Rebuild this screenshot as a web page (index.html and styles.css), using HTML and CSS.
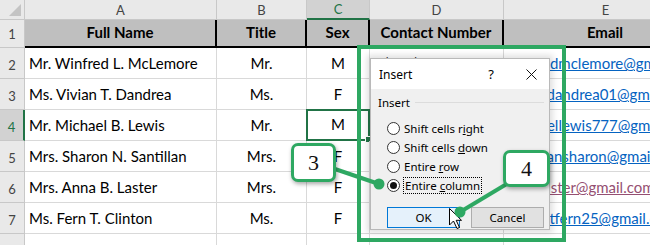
FILE: index.html
```html
<!DOCTYPE html>
<html lang="en">
<head>
  <meta charset="utf-8">
  <link rel="stylesheet" href="styles.css">
  <title>Insert column</title>
</head>
<body>
  <div class="sheet">
    <div class="corner"><span class="tri"></span></div>
    <div class="colh">A</div>
    <div class="colh">B</div>
    <div class="colh sel">C</div>
    <div class="colh">D</div>
    <div class="colh">E</div>

    <div class="rowh">1</div>
    <div class="cell hd">Full Name</div>
    <div class="cell hd">Title</div>
    <div class="cell hd">Sex</div>
    <div class="cell hd">Contact Number</div>
    <div class="cell hd">Email</div>

    <div class="rowh">2</div>
    <div class="cell">Mr. Winfred L. McLemore</div>
    <div class="cell mid">Mr.</div>
    <div class="cell mid">M</div>
    <div class="cell mid">(405) 555-0134</div>
    <div class="cell"><a href="#">winfredmclemore@gmail.com</a></div>

    <div class="rowh">3</div>
    <div class="cell">Ms. Vivian T. Dandrea</div>
    <div class="cell mid">Ms.</div>
    <div class="cell mid">F</div>
    <div class="cell mid">(405) 555-0178</div>
    <div class="cell"><a href="#">viviandandrea01@gmail.com</a></div>

    <div class="rowh sel">4</div>
    <div class="cell">Mr. Michael B. Lewis</div>
    <div class="cell mid">Mr.</div>
    <div class="cell mid active">M<span class="handle"></span></div>
    <div class="cell mid">(405) 555-0112</div>
    <div class="cell"><a href="#">michaellewis777@gmail.com</a></div>

    <div class="rowh">5</div>
    <div class="cell">Mrs. Sharon N. Santillan</div>
    <div class="cell mid">Mrs.</div>
    <div class="cell mid">F</div>
    <div class="cell mid">(405) 555-0190</div>
    <div class="cell"><a href="#">santillansharon@gmail.com</a></div>

    <div class="rowh">6</div>
    <div class="cell">Mrs. Anna B. Laster</div>
    <div class="cell mid">Mrs.</div>
    <div class="cell mid">F</div>
    <div class="cell mid">(405) 555-0145</div>
    <div class="cell"><a href="#" class="visited">annalaster@gmail.com</a></div>

    <div class="rowh">7</div>
    <div class="cell">Ms. Fern T. Clinton</div>
    <div class="cell mid">Ms.</div>
    <div class="cell mid">F</div>
    <div class="cell mid">(405) 555-0163</div>
    <div class="cell"><a href="#">msclintfern25@gmail.com</a></div>

    <div class="rowh">8</div>
    <div class="cell"></div>
    <div class="cell"></div>
    <div class="cell"></div>
    <div class="cell"></div>
    <div class="cell"></div>
  </div>

  <div class="dialog">
    <div class="dlg-title">
      <span class="dlg-name">Insert</span>
      <span class="dlg-help">?</span>
      <span class="dlg-close">
        <svg width="11" height="11" viewBox="0 0 11 11"><path d="M0.5 0.5 L10.5 10.5 M10.5 0.5 L0.5 10.5" stroke="#111" stroke-width="1"/></svg>
      </span>
    </div>
    <div class="dlg-body">
      <div class="group"><span>Insert</span></div>
      <ul class="options">
        <li><span class="radio"></span><span>Shift cells r<u>i</u>ght</span></li>
        <li><span class="radio"></span><span>Shift cells <u>d</u>own</span></li>
        <li><span class="radio"></span><span>Entire <u>r</u>ow</span></li>
        <li><span class="radio on"></span><span class="focus">Entire <u>c</u>olumn</span></li>
      </ul>
      <div class="buttons">
        <span class="btn default">OK</span>
        <span class="btn">Cancel</span>
      </div>
    </div>
  </div>

  <svg class="marks" width="650" height="245" viewBox="0 0 650 245">
    <rect x="359" y="47" width="205" height="193" fill="none" stroke="#2ea862" stroke-width="4"/>
    <line x1="332" y1="168" x2="379" y2="184" stroke="#2ea862" stroke-width="4"/>
    <circle cx="379" cy="184" r="5.5" fill="#2ea862"/>
    <line x1="510" y1="182" x2="460" y2="212" stroke="#2ea862" stroke-width="4"/>
    <path d="M449.5 208.5 L449.5 225 L453.5 221 L457 228.5 L459.5 227.5 L456.2 220.3 L461.5 220.3 Z" fill="#fff" stroke="#000" stroke-width="1"/>
    <circle cx="460" cy="212" r="5.5" fill="#2ea862"/>
  </svg>

  <div class="callout c3">3</div>
  <div class="callout c4">4</div>
</body>
</html>
```

FILE: styles.css
```css
:root {
  --grid: #d9d9d9;
  --head: #e9e9e9;
  --head-sel: #d2d2d2;
  --xl-green: #217346;
  --mark: #2ea862;
}

body {
  margin: 0;
  width: 650px;
  height: 245px;
  overflow: hidden;
  background: #fff;
  font-family: Lato, "Liberation Sans", sans-serif;
  color: #000;
}

/* spreadsheet */

.sheet {
  display: grid;
  grid-template-columns: 25px 192px 90px 63px 134px 204px;
  grid-template-rows: 20px 28px repeat(7, 31px);
  width: 708px;
}

.corner, .colh, .rowh {
  background: var(--head);
  border-right: 1px solid #c8c8c8;
  border-bottom: 1px solid #c8c8c8;
  color: #444;
  font-size: 13px;
}

.corner {
  display: flex;
  align-items: flex-end;
  justify-content: flex-end;
  padding: 0 3px 3px 0;
}
.tri {
  width: 0;
  height: 0;
  border-left: 12px solid transparent;
  border-bottom: 12px solid #c4c4c4;
}

.colh {
  display: flex;
  align-items: center;
  justify-content: center;
}
.colh.sel {
  background: var(--head-sel);
  color: var(--xl-green);
  border-bottom: 2px solid var(--xl-green);
}

.rowh {
  display: flex;
  align-items: flex-end;
  justify-content: center;
  padding-bottom: 5px;
}
.rowh.sel {
  background: var(--head-sel);
  color: var(--xl-green);
  border-right: 2px solid var(--xl-green);
}

.cell {
  display: flex;
  align-items: flex-end;
  padding: 0 4px 6px;
  border-right: 1px solid var(--grid);
  border-bottom: 1px solid var(--grid);
  font-size: 15px;
  line-height: 18px;
  white-space: nowrap;
  position: relative;
}
.cell.mid {
  justify-content: center;
}
.cell.hd {
  justify-content: center;
  background: #bfbfbf;
  font-weight: bold;
  border-right: 2px solid #000;
  border-bottom: 2px solid #000;
  padding-bottom: 5px;
}
.cell.active {
  border: 2px solid var(--xl-green);
  margin: -1px 0 0 -1px;
}
.handle {
  position: absolute;
  right: -4px;
  bottom: -4px;
  width: 5px;
  height: 5px;
  background: var(--xl-green);
  border: 1px solid #fff;
}

.cell a {
  color: #0563c1;
  text-decoration: underline;
}
.cell a.visited {
  color: #954f72;
}

/* Insert dialog */

.dialog {
  position: absolute;
  left: 370px;
  top: 58px;
  width: 180px;
  height: 172px;
  box-sizing: border-box;
  border: 1px solid #b9b9b9;
  background: #f0f0f0;
  box-shadow: 0 0 6px 3px rgba(0, 0, 0, 0.12);
  font-family: "Noto Sans", "Open Sans", sans-serif;
  font-size: 11.5px;
  color: #000;
}

.dlg-title {
  display: flex;
  align-items: center;
  height: 30px;
  padding: 0 0 0 8px;
  background: #fff;
  font-size: 12px;
}
.dlg-name {
  flex: 1;
}
.dlg-help {
  width: 44px;
  text-align: center;
  font-size: 13px;
}
.dlg-close {
  width: 36px;
  display: flex;
  justify-content: center;
  padding-top: 1px;
}

.dlg-body {
  padding: 6px 5px 0 7px;
}

.group {
  display: flex;
  align-items: center;
  gap: 5px;
}
.group::after {
  content: "";
  flex: 1;
  height: 1px;
  background: #dcdcdc;
}

.options {
  list-style: none;
  margin: 10px 0 0 9px;
  padding: 0;
  display: flex;
  flex-direction: column;
  gap: 3px;
}
.options li {
  display: flex;
  align-items: center;
  height: 16px;
  gap: 4px;
}
.radio {
  width: 11px;
  height: 11px;
  border: 1px solid #333;
  border-radius: 50%;
  background: #fff;
  display: flex;
  align-items: center;
  justify-content: center;
}
.radio.on::after {
  content: "";
  width: 7px;
  height: 7px;
  border-radius: 50%;
  background: #111;
}
.focus {
  outline: 1px dotted #000;
  outline-offset: 0;
  padding: 0 1px;
}

.buttons {
  display: flex;
  gap: 11px;
  margin: 14px 0 0 9px;
}
.btn {
  width: 73px;
  height: 21px;
  box-sizing: border-box;
  display: flex;
  align-items: center;
  justify-content: center;
  background: #e1e1e1;
  border: 1px solid #adadad;
}
.btn.default {
  background: #e5f1fb;
  border: 1px solid #0078d7;
}

/* annotations */

.marks {
  position: absolute;
  left: 0;
  top: 0;
}

.callout {
  position: absolute;
  box-sizing: border-box;
  display: flex;
  align-items: center;
  justify-content: center;
  background: #fff;
  border: 3px solid var(--mark);
  border-radius: 7px;
  box-shadow: 1px 2px 4px rgba(0, 0, 0, 0.35);
  font-family: "Liberation Serif", serif;
  font-size: 22px;
  color: #111;
}
.c3 {
  left: 291px;
  top: 143px;
  width: 45px;
  height: 39px;
}
.c4 {
  left: 503px;
  top: 150px;
  width: 47px;
  height: 37px;
}
```
